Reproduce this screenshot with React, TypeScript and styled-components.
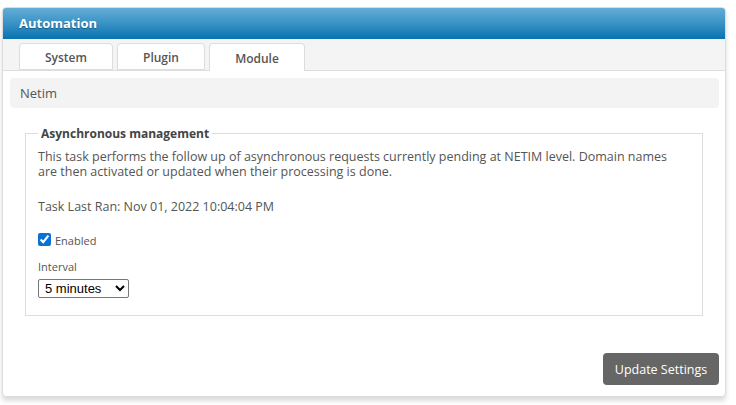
import React from "react";
import styled, { createGlobalStyle } from "styled-components";

const Global = createGlobalStyle`
  html, body { margin: 0; padding: 0; background: #fff; }
  body { font-family: "Open Sans", "Noto Sans", sans-serif; }
  * { box-sizing: border-box; }
`;

const Page = styled.div`
  padding: 7px 10px 8px 2px;
`;

const Card = styled.div`
  width: 724px;
  border: 1px solid #dcdcdc;
  border-radius: 4px;
  background: #fff;
  box-shadow: 0 4px 5px rgba(0, 0, 0, 0.14);
  overflow: hidden;
`;

const Header = styled.div`
  height: 32px;
  margin: -1px -1px 0 -1px;
  padding: 0 17px;
  display: flex;
  align-items: center;
  background: linear-gradient(to bottom, #66afd6 0%, #3a93c6 50%, #0a72b0 100%);
  color: #fff;
  font-weight: 700;
  font-size: 13px;
  text-shadow: 0 1px 1px rgba(0, 0, 0, 0.35);
  border-radius: 4px 4px 0 0;
`;

const TabBar = styled.div`
  display: flex;
  gap: 4px;
  align-items: flex-end;
  height: 32px;
  padding: 0 16px;
  background: #f4f4f4;
  border-bottom: 1px solid #dddddd;
`;

const Tab = styled.div<{ $active?: boolean; $w: number }>`
  width: ${(p) => p.$w}px;
  height: ${(p) => (p.$active ? 28 : 27)}px;
  margin-bottom: ${(p) => (p.$active ? -1 : 0)}px;
  padding-top: 2px;
  display: flex;
  align-items: center;
  justify-content: center;
  background: #fff;
  border: 1px solid #dddddd;
  border-bottom: ${(p) => (p.$active ? "none" : "1px solid #dddddd")};
  border-radius: 4px 4px 0 0;
  font-size: 12px;
  font-weight: 600;
  color: #555;
`;

const Body = styled.div`
  padding: 7px 6px 11px 7px;
`;

const ModuleBar = styled.div`
  height: 30px;
  display: flex;
  align-items: center;
  padding: 0 10px;
  background: #f3f3f3;
  border-radius: 4px;
  font-size: 13px;
  color: #555;
`;

const Fieldset = styled.fieldset`
  margin: 17px 16px 0 15px;
  padding: 7px 20px 17px 12px;
  border: 1px solid #dddddd;
`;

const Legend = styled.legend`
  padding: 0 3px;
  margin-left: 0;
  font-size: 12px;
  font-weight: 700;
  color: #444;
`;

const Para = styled.p<{ $last?: boolean }>`
  margin: 0 0 ${(p) => (p.$last ? 0 : 20)}px 0;
  font-size: 12.5px;
  line-height: 15px;
  color: #555;
`;

const CheckRow = styled.label`
  display: flex;
  align-items: center;
  gap: 4px;
  margin-top: 16px;
  font-size: 11px;
  color: #555;
  input {
    margin: 0;
    width: 13px;
    height: 13px;
    accent-color: #0a72d6;
  }
  span {
    padding-top: 3px;
  }
`;

const FieldLabel = styled.div`
  margin-top: 11px;
  font-size: 11px;
  color: #555;
`;

const Select = styled.select`
  margin-top: 5px;
  height: 19px;
  width: 91px;
  font-family: "Liberation Sans", Arial, sans-serif;
  font-size: 13px;
  color: #000;
  border: 1px solid #767676;
  border-radius: 2px;
  background: #fff;
  padding: 0 2px;
`;

const Footer = styled.div`
  display: flex;
  justify-content: flex-end;
  margin-top: 37px;
`;

const Button = styled.button`
  width: 116px;
  height: 32px;
  border: none;
  border-radius: 4px;
  background: #666;
  color: #fff;
  font-family: "Open Sans", sans-serif;
  font-size: 12.5px;
`;

export default function App() {
  return (
    <>
      <Global />
      <Page>
        <Card>
          <Header>Automation</Header>
          <TabBar>
            <Tab $w={94}>System</Tab>
            <Tab $w={88}>Plugin</Tab>
            <Tab $w={96} $active>Module</Tab>
          </TabBar>
          <Body>
            <ModuleBar>Netim</ModuleBar>
            <Fieldset>
              <Legend>Asynchronous management</Legend>
              <Para>
                This task performs the follow up of asynchronous requests currently pending at NETIM level. Domain names are then activated or updated when their processing is done.
              </Para>
              <Para $last>Task Last Ran: Nov 01, 2022 10:04:04 PM</Para>
              <CheckRow>
                <input type="checkbox" defaultChecked />
                <span>Enabled</span>
              </CheckRow>
              <FieldLabel>Interval</FieldLabel>
              <Select defaultValue="5">
                <option value="5">5 minutes</option>
                <option value="10">10 minutes</option>
              </Select>
            </Fieldset>
            <Footer>
              <Button>Update Settings</Button>
            </Footer>
          </Body>
        </Card>
      </Page>
    </>
  );
}
